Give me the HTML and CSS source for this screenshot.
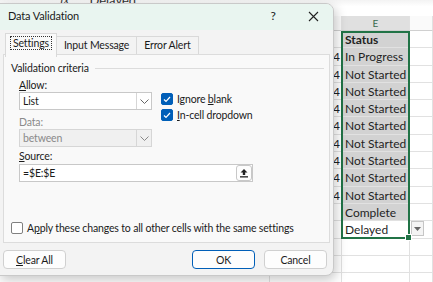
FILE: index.html
```html
<!DOCTYPE html>
<html lang="en">

<head>
  <meta charset="UTF-8" />
  <title>Data Validation</title>
  <link rel="stylesheet" href="styles.css">
</head>

<body>
  <div class="formula-bar">
    <span class="fx">fx</span>
    <span class="formula-text">Delayed</span>
  </div>

  <div class="sheet">
    <div class="row head">
      <div class="cell gap"></div>
      <div class="cell col-d"></div>
      <div class="cell col-e hdr-e">E</div>
      <div class="cell col-f"></div>
    </div>
    <div class="row"><div class="cell gap"></div><div class="cell col-d"></div><div class="cell col-e sel bold">Status</div><div class="cell col-f"></div></div>
    <div class="row"><div class="cell gap"></div><div class="cell col-d num">4</div><div class="cell col-e sel">In Progress</div><div class="cell col-f"></div></div>
    <div class="row"><div class="cell gap"></div><div class="cell col-d num">4</div><div class="cell col-e sel">Not Started</div><div class="cell col-f"></div></div>
    <div class="row"><div class="cell gap"></div><div class="cell col-d num">4</div><div class="cell col-e sel">Not Started</div><div class="cell col-f"></div></div>
    <div class="row"><div class="cell gap"></div><div class="cell col-d num">4</div><div class="cell col-e sel">Not Started</div><div class="cell col-f"></div></div>
    <div class="row"><div class="cell gap"></div><div class="cell col-d num">4</div><div class="cell col-e sel">Not Started</div><div class="cell col-f"></div></div>
    <div class="row"><div class="cell gap"></div><div class="cell col-d num">4</div><div class="cell col-e sel">Not Started</div><div class="cell col-f"></div></div>
    <div class="row"><div class="cell gap"></div><div class="cell col-d num">4</div><div class="cell col-e sel">Not Started</div><div class="cell col-f"></div></div>
    <div class="row"><div class="cell gap"></div><div class="cell col-d num">4</div><div class="cell col-e sel">Not Started</div><div class="cell col-f"></div></div>
    <div class="row"><div class="cell gap"></div><div class="cell col-d num">4</div><div class="cell col-e sel">Not Started</div><div class="cell col-f"></div></div>
    <div class="row"><div class="cell gap"></div><div class="cell col-d"></div><div class="cell col-e sel">Complete</div><div class="cell col-f"></div></div>
    <div class="row"><div class="cell gap"></div><div class="cell col-d"></div><div class="cell col-e active">Delayed</div>
      <div class="cell col-f"><span class="dd-btn"><svg width="7" height="4" viewBox="0 0 7 4"><path d="M0 0h7L3.5 4z" fill="#666"/></svg></span></div>
    </div>
    <div class="row"><div class="cell gap"></div><div class="cell col-d"></div><div class="cell col-e"></div><div class="cell col-f"></div></div>
    <div class="row"><div class="cell gap"></div><div class="cell col-d"></div><div class="cell col-e"></div><div class="cell col-f"></div></div>
    <div class="row"><div class="cell gap"></div><div class="cell col-d"></div><div class="cell col-e"></div><div class="cell col-f"></div></div>
    <div class="selection"><span class="handle"></span></div>
  </div>

  <div class="dialog">
    <div class="title-bar">
      <span class="title">Data Validation</span>
      <span class="help">?</span>
      <span class="close">
        <svg width="11" height="11" viewBox="0 0 11 11"><path d="M1 1l9 9M10 1l-9 9" stroke="#222" stroke-width="1.1"/></svg>
      </span>
    </div>

    <div class="tabs">
      <div class="tab active"><span class="focus">Settings</span></div>
      <div class="tab">Input Message</div>
      <div class="tab">Error Alert</div>
    </div>

    <div class="panel">
      <div class="legend"><span>Validation criteria</span></div>

      <div class="criteria">
        <div class="left-col">
          <div class="label"><u>A</u>llow:</div>
          <div class="select">
            <span class="value">List</span>
            <span class="arrow"><svg width="9" height="5" viewBox="0 0 9 5"><path d="M0.5 0.5l4 4 4-4" fill="none" stroke="#666"/></svg></span>
          </div>
          <div class="label muted">Data:</div>
          <div class="select disabled">
            <span class="value">between</span>
            <span class="arrow"><svg width="9" height="5" viewBox="0 0 9 5"><path d="M0.5 0.5l4 4 4-4" fill="none" stroke="#888"/></svg></span>
          </div>
        </div>
        <div class="right-col">
          <div class="check-row">
            <span class="box checked"><svg width="8" height="7" viewBox="0 0 8 7"><path d="M1 3.5l2 2 4-4.5" fill="none" stroke="#fff" stroke-width="1.2"/></svg></span>
            <span>Ignore <u>b</u>lank</span>
          </div>
          <div class="check-row">
            <span class="box checked"><svg width="8" height="7" viewBox="0 0 8 7"><path d="M1 3.5l2 2 4-4.5" fill="none" stroke="#fff" stroke-width="1.2"/></svg></span>
            <span><u>I</u>n-cell dropdown</span>
          </div>
        </div>
      </div>

      <div class="source">
        <div class="label"><u>S</u>ource:</div>
        <div class="source-input">
          <span class="value">=$E:$E</span>
          <span class="pick">
            <svg width="10" height="10" viewBox="0 0 10 10"><path d="M5 1L1.5 4.5h2.3V7h2.4V4.5h2.3z" fill="#222"/><rect x="1" y="8.2" width="8" height="1.3" fill="#222"/></svg>
          </span>
        </div>
      </div>

      <div class="apply-row">
        <span class="box"></span>
        <span>A<u>p</u>ply these changes to all other cells with the same settings</span>
      </div>
    </div>

    <div class="footer">
      <button class="btn"><u>C</u>lear All</button>
      <div class="btn-group">
        <button class="btn default">OK</button>
        <button class="btn">Cancel</button>
      </div>
    </div>
  </div>
</body>

</html>
```

FILE: styles.css
```css
body {
  margin: 0;
  width: 433px;
  height: 282px;
  overflow: hidden;
  background: #ffffff;
  font-family: Lato, "Noto Sans", sans-serif;
  position: relative;
}

/* formula bar, mostly hidden behind the dialog */
.formula-bar {
  height: 16px;
  display: flex;
  align-items: flex-start;
  gap: 20px;
  padding-left: 60px;
  background: linear-gradient(#f3f3f3, #ffffff 40%);
  font-size: 13px;
  line-height: 0;
  color: #333;
}

.formula-bar .fx {
  font-style: italic;
  font-family: "Liberation Serif", serif;
}

/* worksheet */
.sheet {
  position: relative;
  font-size: 12px;
  color: #1f1f1f;
}

.row {
  display: grid;
  grid-template-columns: 270px 72px 68px 1fr;
  height: 17.3px;
}

.row.head {
  height: 15px;
}

.cell {
  border-right: 1px solid #e1e1e1;
  border-bottom: 1px solid #e1e1e1;
  box-sizing: border-box;
  padding-left: 3px;
  line-height: 17px;
  white-space: nowrap;
  overflow: hidden;
}

.head .cell {
  border-bottom-color: #d0d0d0;
  background: #fafafa;
}

.head .hdr-e {
  background: #e0e0e0;
  text-align: center;
  font-size: 10px;
  line-height: 14px;
  color: #3b6b4f;
  padding-left: 0;
}

.num {
  text-align: right;
  padding-right: 1px;
}

.sel {
  background: #d2d2d2;
}

.bold {
  font-weight: bold;
}

.active {
  background: #ffffff;
}

.col-f {
  position: relative;
  overflow: visible;
}

.dd-btn {
  position: absolute;
  left: 1px;
  top: 0;
  width: 13px;
  height: 15px;
  box-sizing: border-box;
  border: 1px solid #c6c6c6;
  background: #f4f4f4;
  display: flex;
  align-items: center;
  justify-content: center;
}

.selection {
  position: absolute;
  left: 341px;
  top: 15px;
  width: 69px;
  height: 208px;
  border: 2px solid #217346;
  box-sizing: border-box;
  pointer-events: none;
}

.handle {
  position: absolute;
  right: -4px;
  bottom: -4px;
  width: 5px;
  height: 5px;
  background: #217346;
  border: 1px solid #fff;
}

/* dialog window */
.dialog {
  position: absolute;
  left: -1px;
  top: 3px;
  width: 335px;
  height: 273px;
  box-sizing: border-box;
  background: #f3f3f3;
  border: 1px solid #c9c9c9;
  border-radius: 0 8px 8px 0;
  box-shadow: 2px 4px 12px rgba(0, 0, 0, 0.22);
  overflow: hidden;
  font-size: 10.5px;
  letter-spacing: -0.15px;
  color: #1b1b1b;
  display: flex;
  flex-direction: column;
}

.title-bar {
  height: 26px;
  box-sizing: border-box;
  background: #e9f5f0;
  display: flex;
  align-items: flex-start;
  padding: 4px 0 0 8px;
  line-height: 16px;
}

.title {
  flex: 1;
  font-size: 11px;
}

.help {
  width: 40px;
  text-align: center;
  font-size: 12px;
}

.close {
  width: 40px;
  height: 16px;
  display: flex;
  align-items: center;
  justify-content: center;
}

.tabs {
  display: flex;
  margin: 6px 0 0 6px;
  height: 18px;
  position: relative;
  z-index: 1;
}

.tab {
  padding: 0 7px;
  line-height: 17px;
  border: 1px solid #d9d9d9;
  border-bottom: none;
  margin-left: -1px;
  background: #f3f3f3;
}

.tab.active {
  background: #f9f9f9;
  margin-top: -3px;
  height: 22px;
  padding: 1px 4px 0;
  line-height: 16px;
}

.focus {
  border: 1px dotted #333;
  padding: 0 2px;
}

.panel {
  margin: 0 3px;
  height: 189px;
  box-sizing: border-box;
  background: #f9f9f9;
  border: 1px solid #dcdcdc;
  display: flex;
  flex-direction: column;
  padding: 5px 0 7px;
}

.legend {
  display: flex;
  align-items: center;
  gap: 6px;
  padding: 0 5px 0 7px;
  height: 16px;
}

.legend::after {
  content: "";
  flex: 1;
  height: 1px;
  background: #dcdcdc;
}

.criteria {
  display: flex;
  padding-left: 15px;
  margin-top: 2px;
}

.left-col {
  width: 133px;
}

.label {
  height: 14px;
  line-height: 14px;
}

.muted {
  color: #8a8a8a;
  margin-top: 5px;
}

.select {
  height: 18px;
  box-sizing: border-box;
  background: #fff;
  border: 1px solid #c8c8c8;
  display: flex;
  align-items: center;
}

.select .value {
  flex: 1;
  padding-left: 3px;
}

.select .arrow {
  width: 14px;
  align-self: stretch;
  border-left: 1px solid #d6d6d6;
  display: flex;
  align-items: center;
  justify-content: center;
}

.select.disabled {
  background: #f0f0f0;
  color: #8a8a8a;
  border-color: #d6d6d6;
}

.right-col {
  margin-left: 9px;
  padding-top: 14px;
  display: flex;
  flex-direction: column;
  gap: 2px;
}

.check-row,
.apply-row {
  display: flex;
  align-items: center;
  gap: 4px;
  height: 14px;
}

.box {
  width: 12px;
  height: 12px;
  box-sizing: border-box;
  border: 1px solid #808080;
  border-radius: 2px;
  background: #fff;
  display: flex;
  align-items: center;
  justify-content: center;
}

.box.checked {
  background: #005fb8;
  border-color: #005fb8;
}

.source {
  padding-left: 15px;
  margin-top: 2px;
}

.source-input {
  width: 234px;
  height: 18px;
  margin-top: 1px;
  box-sizing: border-box;
  background: #fff;
  border: 1px solid #c8c8c8;
  display: flex;
  align-items: center;
}

.source-input .value {
  flex: 1;
  padding-left: 3px;
}

.pick {
  width: 16px;
  height: 16px;
  box-sizing: border-box;
  border: 1px solid #c8c8c8;
  border-radius: 3px;
  background: #fdfdfd;
  display: flex;
  align-items: center;
  justify-content: center;
}

.apply-row {
  margin-top: auto;
  padding-left: 7px;
}

.footer {
  display: flex;
  justify-content: space-between;
  margin-top: 7px;
  padding: 0 6px 0 3px;
}

.btn-group {
  display: flex;
  gap: 9px;
}

.btn {
  width: 63px;
  height: 19px;
  padding: 0;
  font-family: Lato, "Noto Sans", sans-serif;
  font-size: 10.5px;
  letter-spacing: -0.15px;
  color: #1b1b1b;
  background: #fdfdfd;
  border: 1px solid #d0d0d0;
  border-radius: 4px;
}

.btn.default {
  border-color: #005fb8;
}
```
